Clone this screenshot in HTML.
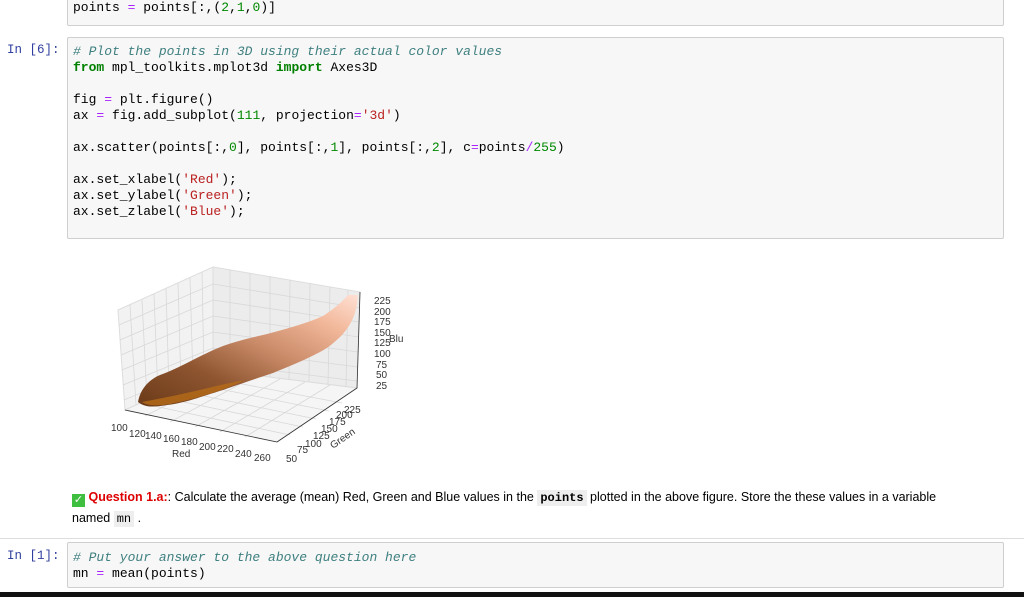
<!DOCTYPE html>
<html><head><meta charset="utf-8"><style>
body{margin:0;background:#fff;width:1024px;height:597px;overflow:hidden;position:relative;font-family:"Liberation Mono",monospace;}
.cell{position:absolute;left:67px;width:935px;background:#f7f7f7;border:1px solid #cfcfcf;border-radius:2px;}
pre{margin:0;font-family:"Liberation Mono",monospace;font-size:13px;line-height:16px;color:#000;}
.p{position:absolute;left:7px;font-family:"Liberation Mono",monospace;font-size:12.5px;color:#303f9f;}
.c{color:#408080;font-style:italic}.k{color:#008000;font-weight:bold}.o{color:#aa22ff}.n{color:#080}.s{color:#ba2121}
.md{position:absolute;left:72px;top:487px;width:890px;font-family:"Liberation Sans",sans-serif;font-size:12.5px;line-height:20px;color:#000}
code{font-family:"Liberation Mono",monospace;background:#eee;padding:1px 3px;font-size:12px}
</style></head><body>
<div class="cell" style="top:-6px;height:30px;"><pre style="padding:5px 5px 0 5px;">points <span class="o">=</span> points[:,(<span class="n">2</span>,<span class="n">1</span>,<span class="n">0</span>)]</pre></div>
<div class="p" style="top:43px">In [6]:</div>
<div class="cell" style="top:37px;height:200px;"><pre style="padding:6px 5px 0 5px;"><span class="c"># Plot the points in 3D using their actual color values</span>
<span class="k">from</span> mpl_toolkits.mplot3d <span class="k">import</span> Axes3D

fig <span class="o">=</span> plt.figure()
ax <span class="o">=</span> fig.add_subplot(<span class="n">111</span>, projection<span class="o">=</span><span class="s">'3d'</span>)

ax.scatter(points[:,<span class="n">0</span>], points[:,<span class="n">1</span>], points[:,<span class="n">2</span>], c<span class="o">=</span>points<span class="o">/</span><span class="n">255</span>)

ax.set_xlabel(<span class="s">'Red'</span>);
ax.set_ylabel(<span class="s">'Green'</span>);
ax.set_zlabel(<span class="s">'Blue'</span>);</pre></div>
<svg style="position:absolute;left:90px;top:260px" width="330" height="210" viewBox="0 0 330 210" font-family="Liberation Sans,sans-serif" font-size="10" fill="#333">
<defs><linearGradient id="g" x1="0" y1="1" x2="1" y2="0"><stop offset="0" stop-color="#6b3a18"/><stop offset=".3" stop-color="#8e5530"/><stop offset=".55" stop-color="#c98a68"/><stop offset=".8" stop-color="#f2b89a"/><stop offset="1" stop-color="#ffe0d4"/></linearGradient></defs>
<polygon points="28,50 123,7 123,110 35,150" fill="#f2f2f2" stroke="#ddd"/>
<polygon points="123,7 270,32 267,128 123,110" fill="#ececec" stroke="#ddd"/>
<polygon points="35,150 123,110 267,128 187,182" fill="#f5f5f5" stroke="#ddd"/>
<g stroke="#d8d8d8" stroke-width=".8" fill="none">
<path d="M40,45 L46,145 M52,40 L57,140 M64,34 L68,135 M76,29 L79,130 M88,23 L91,125 M100,18 L103,120 M112,12 L114,115"/>
<path d="M140,10 L140,112 M160,13 L160,115 M180,16 L180,117 M200,20 L199,120 M220,23 L219,122 M240,27 L238,124 M258,30 L256,127"/>
<path d="M29,65 L123,24 L270,48 M30,80 L123,40 L269,62 M31,95 L123,56 L269,77 M32,110 L123,72 L268,92 M33,125 L123,88 L268,107 M34,140 L123,103 L267,121"/>
<path d="M50,143 L200,175 M65,136 L213,167 M80,129 L226,159 M95,122 L239,151 M110,116 L252,143 M55,156 L140,113 M80,162 L165,116 M105,167 L190,119 M130,172 L215,122 M155,177 L240,125"/>
</g>
<path d="M48,142 C50,130 58,120 70,115 C90,108 110,95 133,86 C150,80 165,77 177,74 C200,68 220,62 233,56 C245,48 252,42 258,35 L268,35 C267,52 262,64 252,75 C245,82 238,88 230,92 C215,100 200,106 183,113 C165,119 150,124 133,130 C110,137 95,143 77,145 C65,147 55,148 48,142 Z" fill="url(#g)"/>
<path d="M52,142 C80,137 110,130 135,124 L155,120 C135,130 105,139 80,144 C68,146 58,146 52,142Z" fill="#b56c18" opacity=".8"/>
<path d="M270,32 L267,128 L187,182" fill="none" stroke="#333" stroke-width=".8"/>
<path d="M35,150 L187,182" fill="none" stroke="#333" stroke-width=".8"/>
<text x="284" y="44">225</text><text x="284" y="55">200</text><text x="284" y="65">175</text><text x="284" y="76">150</text><text x="284" y="86">125</text><text x="284" y="97">100</text><text x="286" y="108">75</text><text x="286" y="118">50</text><text x="286" y="129">25</text>
<text x="299" y="82">Blu</text>
<text x="21" y="171">100</text><text x="39" y="177">120</text><text x="55" y="179">140</text><text x="73" y="182">160</text><text x="91" y="185">180</text><text x="109" y="190">200</text><text x="127" y="192">220</text><text x="145" y="197">240</text><text x="164" y="201">260</text>
<text x="82" y="197">Red</text>
<text x="196" y="202">50</text><text x="207" y="193">75</text><text x="215" y="187">100</text><text x="223" y="179">125</text><text x="231" y="172">150</text><text x="239" y="165">175</text><text x="246" y="158">200</text><text x="254" y="153">225</text>
<text x="243" y="189" transform="rotate(-35 243 189)">Green</text>
</svg>
<div class="md"><span style="display:inline-block;width:13px;height:13px;background:#3fbf3f;color:#fff;font-size:11px;line-height:13px;text-align:center;vertical-align:-2px">✓</span> <span style="color:#d00;font-weight:bold">Question 1.a:</span>: Calculate the average (mean) Red, Green and Blue values in the <code><b>points</b></code> plotted in the above figure. Store the these values in a variable named <code>mn</code> .</div>
<div style="position:absolute;left:0;top:538px;width:1024px;height:54px;border-top:1px solid #ddd;"></div>
<div class="p" style="top:549px">In [1]:</div>
<div class="cell" style="top:542px;height:44px;"><pre style="padding:7px 5px 0 5px;"><span class="c"># Put your answer to the above question here</span>
mn <span class="o">=</span> mean(points)</pre></div>
<div style="position:absolute;left:0;top:592px;width:1024px;height:5px;background:#111"></div>
</body></html>
